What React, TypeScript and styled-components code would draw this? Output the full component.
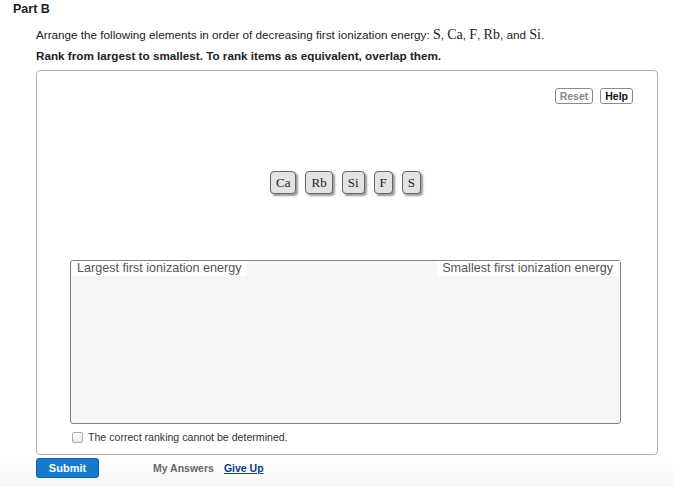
import styled, { createGlobalStyle } from "styled-components";

const GlobalStyle = createGlobalStyle`
  html, body {
    margin: 0;
    padding: 0;
    background: #fff;
    font-family: "Liberation Sans", Arial, Helvetica, sans-serif;
    color: #222;
  }
`;

const Page = styled.div`
  width: 673px;
  height: 487px;
  overflow: hidden;
  background: linear-gradient(to bottom, #fff 0, #fff 457px, #f7f7f7 487px);
`;

const PartTitle = styled.h2`
  margin: 0;
  padding: 2px 0 0 13px;
  font-size: 12.5px;
  font-weight: bold;
  line-height: 15px;
  color: #222;
`;

const Body = styled.div`
  padding: 0 15px 0 36px;
`;

const Prompt = styled.p`
  margin: 10px 0 0;
  font-size: 11.7px;
  line-height: 16px;
  color: #222;
`;

const Math = styled.span`
  font-family: "Liberation Serif", "Times New Roman", serif;
  font-size: 14px;
`;

const Hint = styled.p`
  margin: 5px 0 0;
  font-size: 11.7px;
  font-weight: bold;
  line-height: 15px;
  color: #222;
`;

const Panel = styled.div`
  margin-top: 7px;
  width: 622px;
  height: 385px;
  box-sizing: border-box;
  border: 1px solid #b0b0b0;
  border-radius: 4px;
  padding: 17px 36px 0 33px;
  display: flex;
  flex-direction: column;
`;

const Tools = styled.div`
  display: flex;
  justify-content: flex-end;
  gap: 7px;
  margin-right: -12px;
`;

const ToolButton = styled.button<{ $muted?: boolean }>`
  font-family: "Liberation Sans", Arial, sans-serif;
  font-size: 10.5px;
  font-weight: bold;
  height: 16px;
  padding: 0 4px;
  line-height: 14px;
  background: #fff;
  border: 1px solid #8a8a8a;
  border-radius: 3px;
  color: ${(p) => (p.$muted ? "#888" : "#111")};
`;

const Bank = styled.div`
  margin-top: 67px;
  display: flex;
  justify-content: center;
  gap: 9px;
`;

const Tile = styled.div`
  height: 23px;
  box-sizing: border-box;
  padding: 0 5px;
  border: 1px solid #666;
  border-radius: 4px;
  background: #e3e3e3;
  box-shadow: 2px 2px 2px rgba(0, 0, 0, 0.4);
  font-family: "Liberation Serif", "Times New Roman", serif;
  font-size: 13px;
  line-height: 21px;
  color: #222;
`;

const RankArea = styled.div`
  margin-top: 66px;
  height: 164px;
  box-sizing: border-box;
  border: 1px solid #85828f;
  border-radius: 3px;
  background: #f6f6f6;
  display: flex;
  justify-content: space-between;
  align-items: flex-start;
`;

const Label = styled.span<{ $right?: boolean }>`
  background: #fff;
  font-size: 12.6px;
  line-height: 15px;
  color: #555;
  padding: ${(p) => (p.$right ? "0 7px 0 5px" : "0 5px 0 5px")};
  margin-left: 1px;
`;

const Cannot = styled.label`
  margin-top: 7px;
  display: flex;
  align-items: center;
  gap: 5px;
  font-size: 10.6px;
  color: #333;
`;

const Box = styled.span`
  width: 9px;
  height: 9px;
  margin-left: 2px;
  border: 1px solid #aaa;
  border-radius: 2px;
  background: linear-gradient(#fff, #e8e8e8);
`;

const Footer = styled.div`
  display: flex;
  align-items: center;
  margin-top: 3px;
`;

const Submit = styled.button`
  width: 63px;
  height: 20px;
  border: 1px solid #0f62a8;
  border-radius: 3px;
  background: #1779c9;
  color: #fff;
  font-family: "Liberation Sans", Arial, sans-serif;
  font-size: 11px;
  font-weight: bold;
  padding: 0;
`;

const FooterLink = styled.a<{ $grey?: boolean }>`
  font-size: 10.5px;
  font-weight: bold;
  color: ${(p) => (p.$grey ? "#666" : "#0b3a8a")};
  text-decoration: ${(p) => (p.$grey ? "none" : "underline")};
  margin-left: ${(p) => (p.$grey ? "54px" : "10px")};
`;

export default function App() {
  return (
    <Page>
      <GlobalStyle />
      <PartTitle>Part B</PartTitle>
      <Body>
        <Prompt>
          Arrange the following elements in order of decreasing first ionization energy:{" "}
          <Math>S</Math>, <Math>Ca</Math>, <Math>F</Math>, <Math>Rb</Math>, and <Math>Si</Math>.
        </Prompt>
        <Hint>Rank from largest to smallest. To rank items as equivalent, overlap them.</Hint>
        <Panel>
          <Tools>
            <ToolButton $muted>Reset</ToolButton>
            <ToolButton>Help</ToolButton>
          </Tools>
          <Bank>
            {["Ca", "Rb", "Si", "F", "S"].map((el) => (
              <Tile key={el}>{el}</Tile>
            ))}
          </Bank>
          <RankArea>
            <Label>Largest first ionization energy</Label>
            <Label $right>Smallest first ionization energy</Label>
          </RankArea>
          <Cannot>
            <Box />
            The correct ranking cannot be determined.
          </Cannot>
        </Panel>
        <Footer>
          <Submit>Submit</Submit>
          <FooterLink $grey>My Answers</FooterLink>
          <FooterLink>Give Up</FooterLink>
        </Footer>
      </Body>
    </Page>
  );
}
